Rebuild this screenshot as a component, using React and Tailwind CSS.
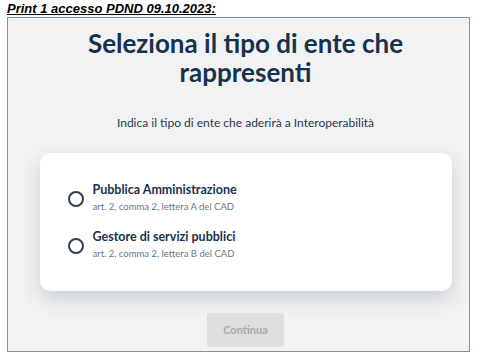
import React from 'react';

const options = [
    { title: 'Pubblica Amministrazione', desc: 'art. 2, comma 2, lettera A del CAD' },
    { title: 'Gestore di servizi pubblici', desc: 'art. 2, comma 2, lettera B del CAD' },
];

export default function App() {
    return (
        <div className="w-[480px] h-[358px] bg-white overflow-hidden font-['Lato',sans-serif]">
            <div className="pl-[7px] pt-[1px] h-[17px] text-[13px] leading-[15px] font-bold italic underline font-['Liberation_Sans',sans-serif] text-black">
                Print 1 accesso PDND 09.10.2023:
            </div>
            <div className="ml-[7px] w-[463px] h-[335px] border border-[#7191c9] bg-[#f2f2f2] pl-[14px] flex flex-col items-center">
                <h1 className="mt-[11px] text-center text-[26px] leading-[29px] font-bold text-[#17324d] w-[340px]">
                    Seleziona il tipo di ente che rappresenti
                </h1>
                <p className="mt-[28px] text-[12px] leading-[16px] text-[#26394d]">
                    Indica il tipo di ente che aderirà a Interoperabilità
                </p>
                <div className="mt-[22px] w-[412px] h-[138px] bg-white rounded-[10px] shadow-[0_8px_20px_rgba(23,50,77,0.18)] pl-[28px] pt-[28px] flex flex-col gap-[14px]">
                    {options.map((o) => (
                        <div key={o.title} className="flex items-center gap-[9px]">
                            <span className="w-[16px] h-[16px] mt-[3px] rounded-full border-2 border-[#2e3f52]" />
                            <div>
                                <div className="text-[12.5px] leading-[17px] font-bold text-[#17324d]">{o.title}</div>
                                <div className="mt-[2px] text-[9.5px] leading-[14px] text-[#6b7785]">{o.desc}</div>
                            </div>
                        </div>
                    ))}
                </div>
                <button className="mt-[22px] w-[77px] h-[34px] rounded-[3px] bg-[#dcdedf] text-[11px] font-bold text-[#a7abaf]">
                    Continua
                </button>
            </div>
        </div>
    );
}
